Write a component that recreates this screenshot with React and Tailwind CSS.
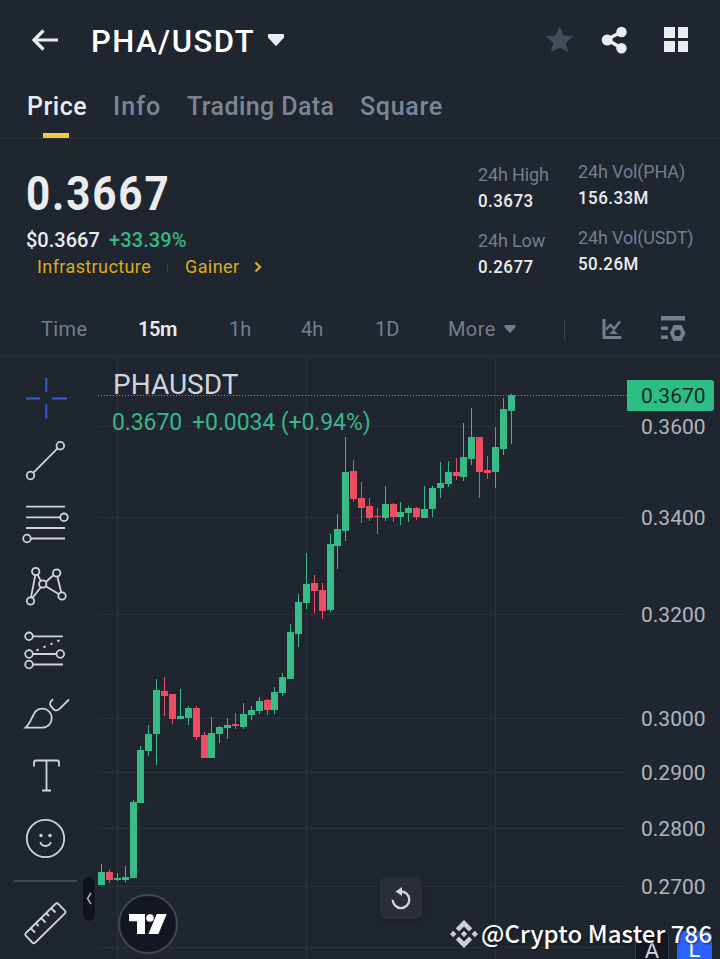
import React from "react";

const UP = "#36bb86";
const DOWN = "#ee4c63";

// x, high, body top, body bottom, low, up?
const candles = [
  [98, 864, 872, 885, 885, 1],
  [106, 870, 872, 880, 883, 0],
  [114, 873, 878, 880, 881, 1],
  [122, 866, 877, 880, 882, 1],
  [130, 800, 802, 878, 878, 1],
  [137, 746, 750, 803, 803, 1],
  [145, 725, 734, 751, 756, 1],
  [153, 679, 690, 734, 765, 1],
  [161, 677, 691, 696, 716, 0],
  [169, 694, 694, 719, 724, 0],
  [177, 689, 716, 719, 719, 1],
  [185, 706, 708, 718, 725, 1],
  [193, 706, 708, 737, 740, 0],
  [201, 732, 735, 758, 758, 0],
  [208, 717, 733, 758, 758, 1],
  [216, 726, 727, 734, 743, 1],
  [224, 718, 725, 728, 739, 1],
  [232, 713, 724, 726, 729, 0],
  [240, 703, 714, 727, 729, 1],
  [248, 706, 710, 715, 720, 1],
  [256, 697, 701, 711, 714, 1],
  [264, 699, 700, 710, 715, 0],
  [271, 687, 692, 710, 714, 1],
  [279, 673, 677, 693, 696, 1],
  [287, 624, 632, 679, 679, 1],
  [295, 594, 602, 634, 647, 1],
  [303, 553, 584, 603, 609, 1],
  [311, 575, 583, 591, 613, 0],
  [319, 583, 590, 611, 619, 0],
  [327, 534, 544, 610, 612, 1],
  [334, 514, 529, 546, 569, 1],
  [342, 437, 472, 531, 541, 1],
  [350, 460, 471, 499, 502, 0],
  [358, 482, 498, 508, 523, 0],
  [366, 498, 506, 518, 521, 0],
  [374, 508, 516, 517, 534, 0],
  [382, 486, 504, 518, 521, 1],
  [390, 503, 504, 517, 522, 0],
  [397, 502, 512, 517, 525, 1],
  [405, 506, 508, 513, 522, 1],
  [413, 507, 508, 517, 520, 0],
  [421, 486, 509, 518, 518, 1],
  [429, 486, 488, 509, 517, 1],
  [437, 462, 483, 488, 498, 1],
  [445, 461, 472, 484, 487, 1],
  [453, 458, 472, 476, 480, 0],
  [460, 423, 457, 477, 481, 1],
  [468, 408, 437, 459, 465, 1],
  [476, 437, 437, 472, 498, 0],
  [484, 456, 470, 473, 479, 0],
  [492, 427, 447, 472, 488, 1],
  [500, 398, 409, 449, 455, 1],
  [508, 394, 395, 411, 444, 1],
];

const priceLevels = [
  { y: 426, label: "0.3600" },
  { y: 517, label: "0.3400" },
  { y: 614, label: "0.3200" },
  { y: 718, label: "0.3000" },
  { y: 772, label: "0.2900" },
  { y: 828, label: "0.2800" },
  { y: 886, label: "0.2700" },
  { y: 947, label: "" },
];

const stats = [
  [
    { label: "24h High", value: "0.3673" },
    { label: "24h Low", value: "0.2677" },
  ],
  [
    { label: "24h Vol(PHA)", value: "156.33M" },
    { label: "24h Vol(USDT)", value: "50.26M" },
  ],
];

const tools = [
  {
    name: "Cross",
    color: "#3b5fd0",
    body: <path d="M46.3 11v14M46.3 37v14.5M26 31.5h14M52 31.5h15" />,
  },
  {
    name: "Trend line",
    body: (
      <>
        <circle cx="30.5" cy="45.5" r="3.8" />
        <circle cx="60.3" cy="15.7" r="3.8" />
        <path d="M33.2 42.8 57.6 18.4" />
      </>
    ),
  },
  {
    name: "Fib retracement",
    body: (
      <>
        <path d="M26 13.7h39M26 24.3h34M26 35h39M31 45.5h34" />
        <circle cx="64" cy="24.3" r="3.8" />
        <circle cx="27" cy="45.5" r="3.8" />
      </>
    ),
  },
  {
    name: "XABCD pattern",
    body: (
      <>
        <circle cx="35.7" cy="15.5" r="3.7" />
        <circle cx="56.7" cy="17" r="3.7" />
        <circle cx="42.7" cy="28" r="3.7" />
        <circle cx="30.5" cy="45" r="3.7" />
        <circle cx="62" cy="40" r="3.7" />
        <path d="M35.3 19.2 31 41.3M37.6 18.7l3.2 6.1M40.9 31.2l-8.4 10.6M45.8 26l7.8-7M45.7 30.2l13 7.8M57.4 20.7l3.8 15.6" />
      </>
    ),
  },
  {
    name: "Long position",
    body: (
      <>
        <circle cx="29" cy="17.3" r="3.8" />
        <circle cx="29" cy="35" r="3.8" />
        <circle cx="60.3" cy="35" r="3.8" />
        <circle cx="29" cy="45.5" r="3.8" />
        <path d="M33 17.3h30M33 35h23.5M33 45.5h30" />
        <path d="m36.5 31.5 26-11.5" strokeWidth="2" strokeDasharray="2.4 5.2" />
      </>
    ),
  },
  {
    name: "Brush",
    body: (
      <>
        <path d="M25.5 45.7C33.5 38.5 32 26.7 42.3 26.7c5.4 0 9.4 4 9.4 9.2 0 5.6-4 9.8-9.7 9.8Z" />
        <path d="M53.2 17.3c-3.4 2-4 4.7-2 7.3 2.5 4 5.5 5 8.3 2.3L69 17.5" />
      </>
    ),
  },
  {
    name: "Text",
    body: <path d="M34 21.5v-4q0-2 2-2h21q2 0 2 2v4M46.5 15.5v30M42 45.5h9" />,
  },
  {
    name: "Emoji",
    body: (
      <>
        <circle cx="45.5" cy="30.5" r="18.7" />
        <circle cx="41" cy="27.5" r="1.7" fill="#d1d4dc" stroke="none" />
        <circle cx="50" cy="27.5" r="1.7" fill="#d1d4dc" stroke="none" />
        <path d="M40.3 34c1.5 5.3 9 5.3 10.5 0" />
      </>
    ),
  },
];

const Caret = ({ className }) => (
  <svg viewBox="0 0 16 12" className={className} fill="currentColor">
    <path d="M0 0h16v3.5L8.7 11.5q-.7.7-1.4 0L0 3.5Z" />
  </svg>
);

function Header() {
  return (
    <header className="flex h-[78px] items-center pt-px pl-8 text-[#eaecef]">
      <svg width="27" height="22" viewBox="0 0 27 22" fill="none" stroke="currentColor" strokeWidth="3.2">
        <path d="M26 11H2M11.5 1.5 2 11l9.5 9.5" />
      </svg>
      <h1 className="ml-8 w-[162px] pt-1 text-[31px] leading-none font-medium tracking-[1.5px] whitespace-nowrap text-white">
        PHA/USDT
      </h1>
      <Caret className="ml-[15px] h-3 w-4" />
      <svg className="ml-[262px]" width="27" height="27" viewBox="0 0 27 27" fill="#434c5a">
        <path
          d="m13.5 1.5 3.7 8.4 8.8.9-6.600 6 2 8.700-7.900-4.400-7.900 4.400 2-8.700-6.600-6 8.800-.9Z"
          stroke="#434c5a"
          strokeLinejoin="round"
        />
      </svg>
      <svg className="ml-[28px]" width="27" height="28" viewBox="0 0 27 28" fill="currentColor">
        <path d="M21 5.5 6 13.5l15 9" fill="none" stroke="currentColor" strokeWidth="3.5" />
        <circle cx="20.5" cy="6" r="5.2" />
        <circle cx="6.2" cy="14" r="5.5" />
        <circle cx="20.5" cy="22.2" r="5.2" />
      </svg>
      <div className="mb-px ml-[36px] grid w-6 grid-cols-2 gap-[3px]">
        {[0, 1, 2, 3].map((i) => (
          <span key={i} className="h-[11px] bg-current" />
        ))}
      </div>
    </header>
  );
}

function Tabs() {
  return (
    <nav className="flex h-[61px] border-b border-[#2d343f] pl-[27px] text-[25px] leading-[58px] font-medium whitespace-nowrap text-[#7d8594]">
      <div className="relative w-[86px] tracking-[0.5px] text-[#eaecef]">
        Price
        <span className="absolute bottom-0 left-4 h-[5px] w-[26px] bg-[#f0cb45]" />
      </div>
      <div className="w-[74px] tracking-[1.1px]">Info</div>
      <div className="w-[173px] tracking-[0.4px]">Trading Data</div>
      <div className="tracking-[0.7px]">Square</div>
    </nav>
  );
}

function Summary() {
  return (
    <section className="flex h-[160px] whitespace-nowrap">
      <div className="w-[478px] pt-7 pl-[26px]">
        <div className="h-[53px] origin-left scale-x-[0.86] text-[49px] leading-[53px] font-bold tracking-[2.2px] text-[#eaecef]">
          0.3667
        </div>
        <div className="flex h-[26px] items-center pt-[14px] text-[20px] leading-none font-medium">
          <span className="w-[83px] text-[#eaecef]">$0.3667</span>
          <span className="tracking-[0.1px] text-[#36b784]">+33.39%</span>
        </div>
        <div className="flex items-center pt-[9px] pl-[11px] text-[18px] leading-[23px] text-[#dfac1c]">
          <span className="w-[130px] tracking-[0.4px]">Infrastructure</span>
          <span className="h-2 w-px bg-[#3a424e]" />
          <span className="ml-[17px] w-[55px] tracking-[0.4px]">Gainer</span>
          <svg className="ml-[14px]" width="8" height="12" viewBox="0 0 8 12" fill="none" stroke="currentColor" strokeWidth="2.2">
            <path d="m1.5 1.5 4.5 4.5-4.5 4.5" />
          </svg>
        </div>
      </div>
      {stats.map((column, i) => (
        <div key={i} className={i === 0 ? "w-[100px] pt-[23px]" : "pt-5"}>
          {column.map((s) => (
            <div key={s.label} className="h-[66px] text-[18px] leading-[26px]">
              <div className="tracking-[-0.15px] text-[#767d8b]">{s.label}</div>
              <div className="origin-left scale-x-[0.94] font-medium tracking-[0.5px] text-[#eaecef]">{s.value}</div>
            </div>
          ))}
        </div>
      ))}
    </section>
  );
}

function Timeframes() {
  return (
    <div className="flex h-[59px] items-center border-b-[3px] border-[#262c37] pt-[4px] pl-[41px] text-[20px] tracking-[0.4px] whitespace-nowrap text-[#767d8b]">
      <span className="w-[97px]">Time</span>
      <span className="w-[91px] font-semibold tracking-[-0.4px] text-[#eaecef]">15m</span>
      <span className="w-[72px] tracking-normal">1h</span>
      <span className="w-[74px] tracking-normal">4h</span>
      <span className="w-[73px] tracking-normal">1D</span>
      <span className="w-[56px]">More</span>
      <Caret className="h-[8px] w-3" />
      <span className="ml-12 h-[21px] w-px bg-[#3a424e]" />
      <svg className="ml-9" width="22" height="22" viewBox="0 0 22 22" fill="none" stroke="currentColor" strokeWidth="3">
        <path d="M3 1v18.5H20.5" />
        <path d="m5 11.5 4.5-4.5 3.5 4 6-7.5" strokeWidth="2.4" />
        <path d="m8 16 4.500-4 4.500 4Z" fill="currentColor" stroke="none" />
      </svg>
      <svg className="ml-[37px]" width="26" height="26" viewBox="0 0 26 26" fill="currentColor">
        <path d="M1 0h24v4.5H1ZM1 10.5h7V14H1ZM1 19.5h7V23H1Z" />
        <path
          fillRule="evenodd"
          d="m13.5 9h8l4 8-4 8h-8l-3.700-8Zm4 4.700a3.300 3.300 0 1 0 0 6.600 3.300 3.300 0 0 0 0-6.600Z"
        />
      </svg>
    </div>
  );
}

function Toolbar() {
  return (
    <aside className="relative flex w-[98px] flex-col pt-[9px]">
      {tools.map((t) => (
        <svg
          key={t.name}
          width="92"
          height="63"
          viewBox="0 0 92 63"
          fill="none"
          stroke={t.color || "#d1d4dc"}
          strokeWidth="1.8"
        >
          {t.body}
        </svg>
      ))}
      <div className="mt-[9px] ml-[14px] h-[2px] w-[63px] bg-[#434651]" />
      <svg className="mt-[19px] ml-6" width="44" height="44" viewBox="0 0 44 44" fill="none" stroke="#d1d4dc" strokeWidth="1.8">
        <path d="m1.9 32 29.500-29q1.500-1.400 3 0l6.500 6.500q1.300 1.500 0 3L11.300 41.500q-1.500 1.400-3 0L1.900 35q-1.300-1.500 0-3ZM7 27.500l4 4M12.200 22.500l2.500 2.500M17.500 17.500l4 4M22.500 12.500l2.500 2.500M27.500 7.500l4 4" />
      </svg>
      <button className="absolute top-[518px] left-[82px] flex h-[46px] w-[14px] items-center justify-center rounded-full border border-[#262b36] bg-[#10131c]">
        <svg width="6" height="13" viewBox="0 0 6 13" fill="none" stroke="#b2b5be" strokeWidth="1.5" className="mb-[2px] shrink-0">
          <path d="M5 .8 1.500 6.500 5 12.200" />
        </svg>
      </button>
    </aside>
  );
}

function Chart() {
  return (
    <svg width="622" height="601" viewBox="98 358 622 601" className="shrink-0">
      <g fill="#2a313c">
        {[117, 306, 495].map((x) => (
          <rect key={x} x={x} y="358" width="1" height="601" />
        ))}
        {priceLevels.map((l) => (
          <rect key={l.y} x="98" y={l.y} width="529" height="1" />
        ))}
      </g>
      <path d="M98 395.5h529" stroke={UP} strokeDasharray="1 2" />
      {candles.map(([x, high, top, bottom, low, up]) => (
        <g key={x} fill={up ? UP : DOWN}>
          <rect x={x + 3} y={high} width="1" height={low - high} />
          <rect x={x} y={top} width="7" height={bottom - top} />
        </g>
      ))}
      <g fill="#b2b5be" fontSize="21" fontFamily="Roboto, sans-serif">
        {priceLevels.map((l) => (
          <text key={l.y} x="641" y={l.y + 8}>
            {l.label}
          </text>
        ))}
        <path d="M627 380h84q3 0 3 3v25q0 3-3 3h-84Z" fill="#2ebd85" />
        <text x="641" y="403" fill="#0c2a20">
          0.3670
        </text>
      </g>
    </svg>
  );
}

function Watermark() {
  return (
    <div className="absolute right-[8px] bottom-[9px] flex items-center">
      <svg width="28" height="28" viewBox="0 0 28 28" fill="#d0d0d0">
        <path d="m14 0 8.200 8.200-3.200 3.200-5-5-5 5-3.200-3.200ZM3.200 10.800 6.400 14l-3.200 3.200L0 14ZM24.800 10.800 28 14l-3.200 3.200-3.200-3.200ZM14 10.800l3.200 3.200-3.200 3.200-3.200-3.200ZM9 16.600l5 5 5-5 3.200 3.200L14 28l-8.200-8.200Z" />
      </svg>
      <span className="mb-[2px] ml-[3px] w-[231px] font-['Noto_Sans_CJK_SC',sans-serif] text-[24px] leading-[30px] font-medium tracking-[0.08px] whitespace-nowrap text-white [text-shadow:1px_1px_2px_rgba(0,0,0,0.6)]">
        @Crypto Master 786
      </span>
    </div>
  );
}

export default function App() {
  return (
    <div className="relative h-[959px] w-[720px] overflow-hidden bg-[#1f262f] font-[Roboto,sans-serif]">
      <Header />
      <Tabs />
      <Summary />
      <Timeframes />
      <main className="relative flex h-[601px]">
        <Toolbar />
        <Chart />

        {/* Symbol legend */}
        <div className="absolute top-[11px] left-[113px] whitespace-nowrap">
          <div className="text-[28px] leading-[32px] text-[#d1d4dc]">PHAUSDT</div>
          <div className="-ml-px flex gap-[10px] pt-[8px] text-[23px] leading-[28px] tracking-[-0.1px] text-[#3cb587]">
            <span>0.3670</span>
            <span>+0.0034 (+0.94%)</span>
          </div>
        </div>

        <div className="absolute bottom-[5px] left-[118px] flex size-[60px] items-center justify-center rounded-full border-2 border-[#434651] bg-[#131722]">
          <svg width="38" height="20" viewBox="0 0 38 20" fill="#fff">
            <path d="M0 0h16v20H8V7.300H0ZM27.700 0h10l-8.300 20h-10Z" />
            <circle cx="21" cy="4" r="3.8" />
          </svg>
        </div>

        <button className="absolute top-[519px] left-[380px] flex size-[42px] items-center justify-center rounded-md bg-[#2a2e39] shadow-md">
          <svg width="22" height="24" viewBox="0 0 22 24" fill="none" stroke="#d1d4dc" strokeWidth="2.3">
            <path d="M11 5.5a8.300 8.300 0 1 1-8.300 8.300" />
            <path d="M5.5 5.5 12 1v9Z" fill="#d1d4dc" stroke="none" />
          </svg>
        </button>

        {/* Scale mode buttons */}
        <div className="absolute top-[573px] left-[635px] flex gap-2 text-center text-[22px] leading-[38px]">
          <div className="h-[40px] w-[34px] rounded-md border border-[#363a45] bg-[#131722] text-[#d1d4dc]">A</div>
          <div className="h-[40px] w-[35px] rounded-md bg-[#2962ff] text-white">L</div>
        </div>
      </main>
      <Watermark />
    </div>
  );
}
